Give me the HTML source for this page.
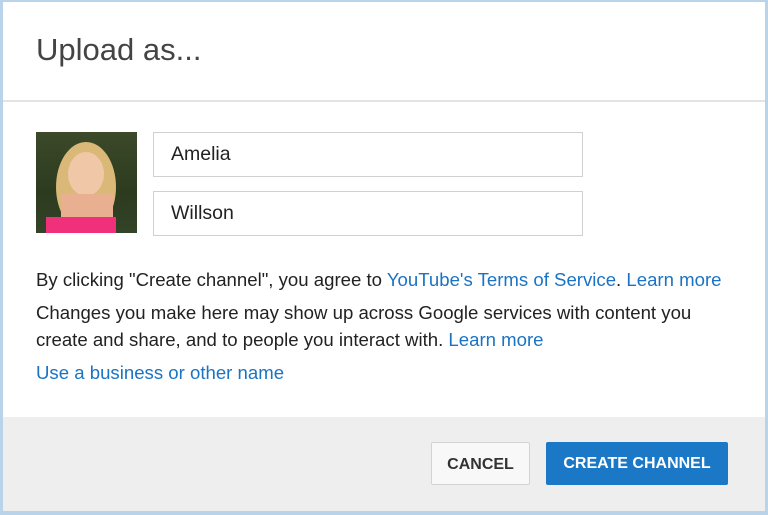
<!DOCTYPE html><html><head><style>
body{margin:0;width:768px;height:515px;background:#b9d3ea;font-family:"Liberation Sans",sans-serif;overflow:hidden;position:relative}
.d{position:absolute;left:3px;top:2px;width:762px;height:509px;background:#fff}
.t{position:absolute;left:33px;top:30px;font-size:31px;color:#444}
.hr{position:absolute;left:0;top:98px;width:762px;height:2px;background:#e3e3e3}
.ph{position:absolute;left:33px;top:130px;width:101px;height:101px;background:linear-gradient(180deg,#3c4a2a,#2c3a1e 60%,#344428)}
.in{position:absolute;left:150px;border:1px solid #d0d0d0;font-size:19.5px;color:#222;line-height:43px;padding-left:17px;box-sizing:border-box;width:430px;height:45px}
.p{position:absolute;left:33px;font-size:18.6px;color:#222;white-space:nowrap}
a{color:#1a73c4;text-decoration:none}
.f{position:absolute;left:0;top:415px;width:762px;height:94px;background:#eee}
.b{position:absolute;top:440px;height:43px;line-height:43px;font-size:16px;font-weight:bold;text-align:center;border-radius:2px;box-sizing:border-box}
</style></head><body><div class="d">
<div class="t">Upload as...</div><div class="hr"></div>
<div class="ph"><svg width="101" height="101"><ellipse cx="50" cy="55" rx="30" ry="45" fill="#d9b878"/><ellipse cx="50" cy="42" rx="18" ry="22" fill="#f0c8a8"/><rect x="25" y="62" width="52" height="40" fill="#e8b090"/><rect x="10" y="85" width="70" height="16" fill="#f0307a"/></svg></div>
<div class="in" style="top:130px">Amelia</div>
<div class="in" style="top:189px">Willson</div>
<div class="p" style="top:267px">By clicking "Create channel", you agree to <a>YouTube's Terms of Service</a>. <a>Learn more</a></div>
<div class="p" style="top:300px">Changes you make here may show up across Google services with content you</div>
<div class="p" style="top:327px">create and share, and to people you interact with. <a>Learn more</a></div>
<div class="p" style="top:360px"><a>Use a business or other name</a></div>
<div class="f"></div>
<div class="b" style="left:428px;width:99px;background:#f8f8f8;border:1px solid #d3d3d3;color:#333">CANCEL</div>
<div class="b" style="left:543px;width:182px;background:#1b78c6;color:#fff">CREATE CHANNEL</div>
</div></body></html>
